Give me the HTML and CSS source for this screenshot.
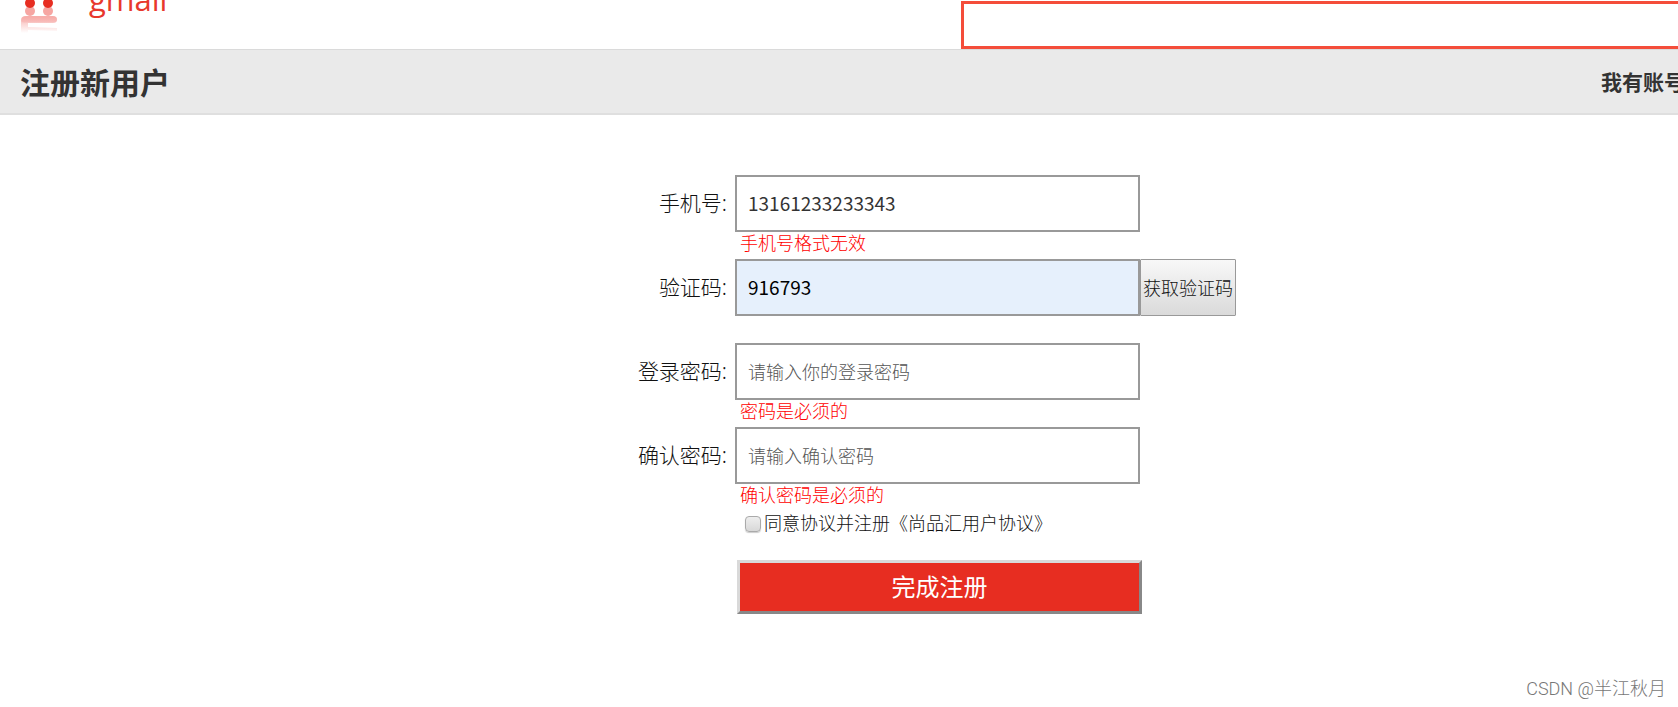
FILE: index.html
```html
<!DOCTYPE html>
<html lang="zh-CN">
<head>
  <meta charset="UTF-8">
  <title>注册新用户</title>
  <link rel="stylesheet" href="styles.css">
</head>
<body>
  <header class="header">
    <a class="logo" href="#">
      <svg class="logo-icon" viewBox="0 0 44 36" aria-hidden="true">
        <defs>
          <linearGradient id="fade" x1="0" y1="0" x2="0" y2="1">
            <stop offset="0" stop-color="#f48f8a" stop-opacity="0.7"/>
            <stop offset="1" stop-color="#f48f8a" stop-opacity="0"/>
          </linearGradient>
        </defs>
        <ellipse cx="12" cy="12" rx="5" ry="5" fill="#f6a6a2"/>
        <ellipse cx="30" cy="12" rx="5" ry="5" fill="#f6a6a2"/>
        <ellipse cx="12" cy="4" rx="5" ry="5" fill="#e72d21"/>
        <ellipse cx="30" cy="4" rx="5" ry="5" fill="#e72d21"/>
        <path d="M3 34V22Q3 17 8 17H35Q39 17 39 20.500Q39 24 35 24H10V28L39 29V32L10 31V34Z" fill="url(#fade)"/>
        <path d="M6 20.500H36" fill="none" stroke="#f48f8a" stroke-opacity="0.25" stroke-width="6" stroke-linecap="round"/>
      </svg>
      <span class="logo-text">gmall</span>
    </a>
    <div class="banner"></div>
  </header>

  <div class="title-bar">
    <h1>注册新用户</h1>
    <a class="login-link" href="#">我有账号</a>
  </div>

  <form class="register">
    <div class="field">
      <label for="phone">手机号:</label>
      <input class="text-input" id="phone" type="text" value="13161233233343">
      <span class="error">手机号格式无效</span>
    </div>
    <div class="field">
      <label for="code">验证码:</label>
      <input class="text-input filled" id="code" type="text" value="916793">
      <button class="code-button" type="button">获取验证码</button>
    </div>
    <div class="field">
      <label for="password">登录密码:</label>
      <input class="text-input" id="password" type="password" placeholder="请输入你的登录密码">
      <span class="error">密码是必须的</span>
    </div>
    <div class="field">
      <label for="confirm">确认密码:</label>
      <input class="text-input" id="confirm" type="password" placeholder="请输入确认密码">
      <span class="error">确认密码是必须的</span>
    </div>
    <div class="agreement">
      <input id="agree" type="checkbox">
      <label for="agree">同意协议并注册《尚品汇用户协议》</label>
    </div>
    <button class="submit-button" type="submit">完成注册</button>
  </form>

  <footer class="watermark">CSDN @半江秋月</footer>
</body>
</html>
```
FILE: styles.css
```css
* {
  box-sizing: border-box;
}

body {
  display: flex;
  flex-direction: column;
  min-height: 100vh;
  margin: 0;
  overflow-x: hidden;
  font-family: "Noto Sans", "Noto Sans CJK SC", sans-serif;
  font-size: 18px;
  font-weight: 300;
  color: #111;
  background: #fff;
}

input,
button {
  font: inherit;
  color: inherit;
}

a {
  color: inherit;
  text-decoration: none;
}

/* header */
.header {
  display: flex;
  align-items: flex-end;
  justify-content: space-between;
  height: 49px;
  padding-left: 18px;
  overflow: hidden;
}

.logo {
  display: flex;
  align-items: flex-end;
  gap: 27px;
  padding-bottom: 14px;
  color: #e8382c;
}

.logo-icon {
  width: 44px;
  height: 36px;
}

.logo-text {
  padding-bottom: 18px;
  font-family: "Open Sans", sans-serif;
  font-size: 31px;
  font-weight: 400;
  line-height: 36px;
}

.banner {
  width: calc(50% - 113px);
  min-width: 300px;
  height: 48px;
  border: 3px solid #f44d3a;
  border-right: 0;
}

.title-bar {
  display: flex;
  align-items: center;
  justify-content: space-between;
  height: 66px;
  padding-left: 20px;
  padding-bottom: 2px;
  overflow: hidden;
  border-top: 1px solid #dadada;
  border-bottom: 2px solid #dfdfdf;
  color: #333;
  background: #eaeaea;
}

.title-bar h1 {
  margin: 0;
  font-size: 30px;
  font-weight: 700;
}

.login-link {
  margin-right: -7px;
  font-size: 21px;
  font-weight: 700;
}

/* form */
.register {
  padding-top: 60px;
  padding-left: calc(50% - 202px);
}

.field {
  display: grid;
  grid-template-columns: 90px 405px auto;
  grid-template-rows: 57px 27px;
  justify-content: start;
  column-gap: 8px;
}

.field label {
  align-self: center;
  padding-bottom: 2px;
  font-size: 21px;
  line-height: 30px;
  text-align: right;
  white-space: nowrap;
}

.text-input {
  width: 100%;
  padding: 0 11px 2px;
  border: 2px solid #999;
  border-radius: 0;
  font-family: "Noto Sans CJK SC", sans-serif;
  font-size: 19px;
  font-weight: 400;
  color: #333;
  background: #fff;
}

.text-input::placeholder {
  font-size: 18px;
  font-weight: 300;
  color: #555;
}

.text-input.filled {
  color: #000;
  background: #e6f0fc;
}

.error {
  grid-column: 2;
  padding-left: 5px;
  line-height: 22px;
  color: #f00;
}

.code-button {
  margin-left: -8px;
  padding: 0 2px 2px;
  border: 1px solid #999;
  border-radius: 1px;
  background: linear-gradient(#f8f8f8, #dadada);
}

.agreement {
  display: flex;
  align-items: center;
  gap: 3px;
  height: 25px;
  padding-left: 108px;
}

.agreement label {
  padding-bottom: 4px;
}

.agreement input {
  width: 16px;
  height: 16px;
  margin: 0;
  appearance: none;
  border: 1px solid #aaa;
  border-radius: 4px;
  background: linear-gradient(#eee, #d8d8d8);
  box-shadow: 0 1px 1px #ccc;
}

.agreement input:checked {
  background: #e72d21;
}

.submit-button {
  width: 405px;
  height: 54px;
  margin: 24px 0 0 100px;
  padding: 0 0 3px;
  border: 3px solid;
  border-color: #d9d9d9 #888 #888 #d9d9d9;
  font-size: 24px;
  font-weight: 400;
  color: #fff;
  background: #e72d21;
}

.watermark {
  margin-top: auto;
  padding: 0 12px 6px;
  font-family: Roboto, "Noto Sans CJK SC", sans-serif;
  line-height: 24px;
  text-align: right;
  color: #777;
}
```
